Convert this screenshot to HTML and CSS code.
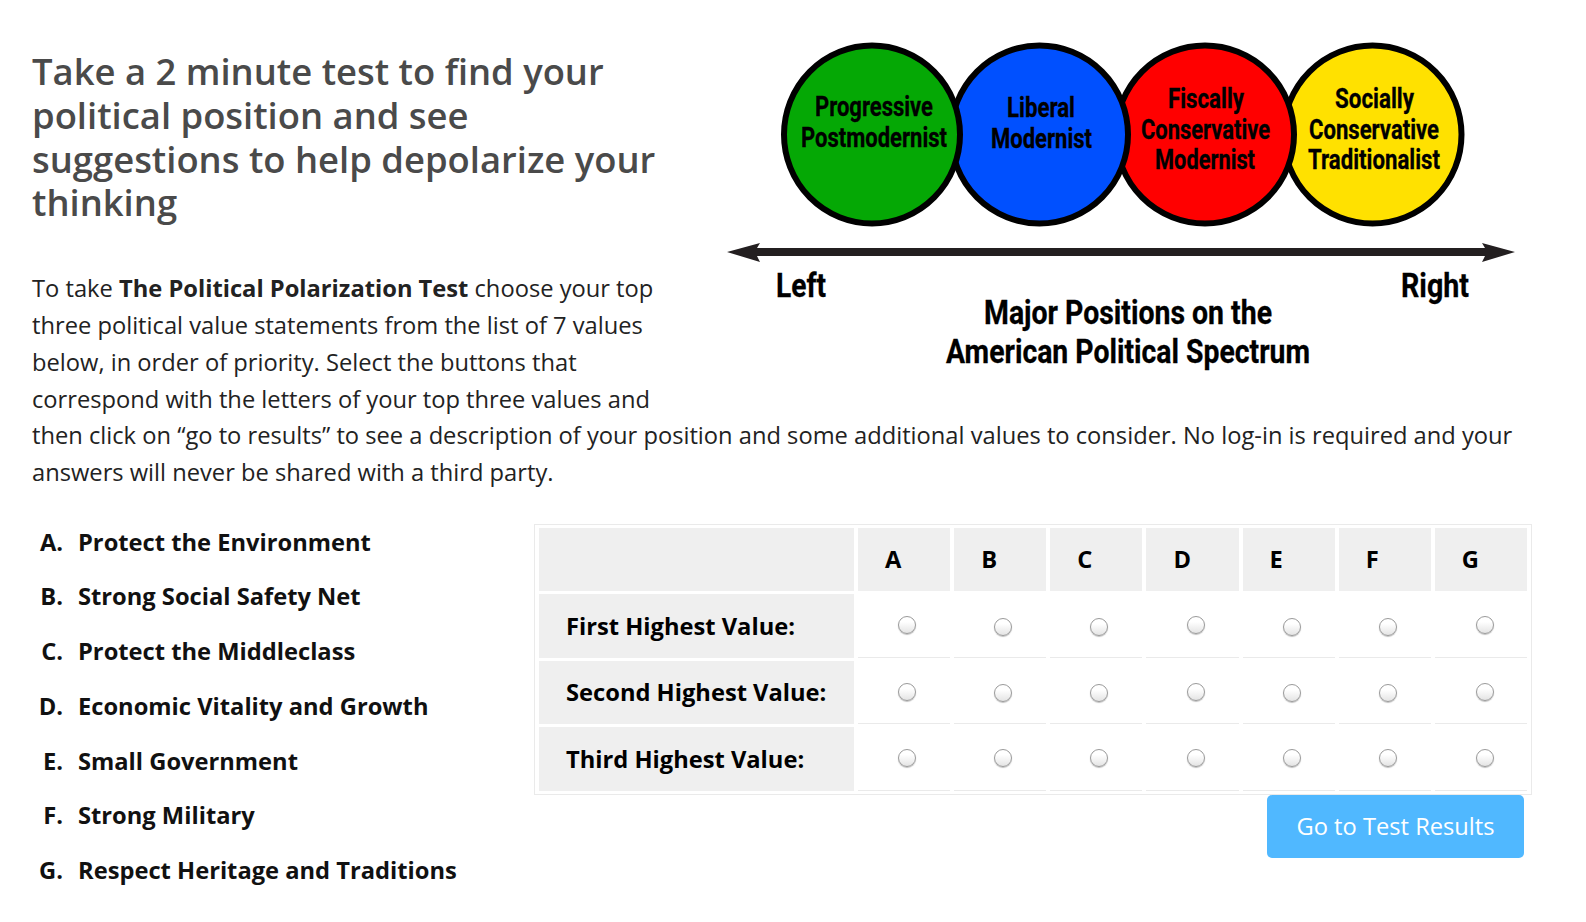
FILE: index.html
```html
<!DOCTYPE html>
<html lang="en">
<head>
    <meta charset="UTF-8">
    <title>The Political Polarization Test</title>
    <link rel="stylesheet" href="styles.css">
</head>
<body>
    <div class="page">
        <div class="intro">
            <svg class="spectrum" viewBox="668 20 864 395" width="864" height="395">
                <ellipse cx="1372.5" cy="134.5" rx="89" ry="89" fill="#ffe100"/>
                <ellipse cx="1205" cy="134.5" rx="89" ry="89" fill="#ff0000"/>
                <ellipse cx="1039.5" cy="134.5" rx="88.5" ry="89" fill="#0050ff"/>
                <ellipse cx="872" cy="134.5" rx="88" ry="89" fill="#05a805"/>

                <path class="axis" d="M727 252 L760 243 L757 248 H1485 L1482 243 L1515 252 L1482 262 L1485 256 H757 L760 262 Z"/>

                <text x="815" y="116" textLength="118" lengthAdjust="spacingAndGlyphs">Progressive</text>
                <text x="801" y="147" textLength="146" lengthAdjust="spacingAndGlyphs">Postmodernist</text>
                <text x="1007" y="117" textLength="68" lengthAdjust="spacingAndGlyphs">Liberal</text>
                <text x="991" y="148" textLength="101" lengthAdjust="spacingAndGlyphs">Modernist</text>
                <text x="1168" y="108" textLength="76" lengthAdjust="spacingAndGlyphs">Fiscally</text>
                <text x="1141" y="139" textLength="129" lengthAdjust="spacingAndGlyphs">Conservative</text>
                <text x="1155" y="169" textLength="100" lengthAdjust="spacingAndGlyphs">Modernist</text>
                <text x="1335" y="108" textLength="79" lengthAdjust="spacingAndGlyphs">Socially</text>
                <text x="1309" y="139" textLength="130" lengthAdjust="spacingAndGlyphs">Conservative</text>
                <text x="1308" y="169" textLength="132" lengthAdjust="spacingAndGlyphs">Traditionalist</text>

                <text class="big" x="776" y="297" textLength="50" lengthAdjust="spacingAndGlyphs">Left</text>
                <text class="big" x="1401" y="297" textLength="68" lengthAdjust="spacingAndGlyphs">Right</text>
                <text class="big" x="984" y="324" textLength="288" lengthAdjust="spacingAndGlyphs">Major Positions on the</text>
                <text class="big" x="946" y="363" textLength="364" lengthAdjust="spacingAndGlyphs">American Political Spectrum</text>
            </svg>
            <h1>Take a 2 minute test to find your political position and see suggestions to help depolarize your thinking</h1>
            <p>To take <strong>The Political Polarization Test</strong> choose your top three political value statements from the list of 7 values below, in order of priority. Select the buttons that correspond with the letters of your top three values and then click on “go to results” to see a description of your position and some additional values to consider. No log-in is required and your answers will never be shared with a third party.</p>
        </div>

        <div class="test-area">
            <ol class="values">
                <li><span class="letter">A.</span> Protect the Environment</li>
                <li><span class="letter">B.</span> Strong Social Safety Net</li>
                <li><span class="letter">C.</span> Protect the Middleclass</li>
                <li><span class="letter">D.</span> Economic Vitality and Growth</li>
                <li><span class="letter">E.</span> Small Government</li>
                <li><span class="letter">F.</span> Strong Military</li>
                <li><span class="letter">G.</span> Respect Heritage and Traditions</li>
            </ol>

            <form class="test-form">
                <table class="grid">
                    <thead>
                        <tr>
                            <th class="row-name"></th>
                            <th>A</th><th>B</th><th>C</th><th>D</th><th>E</th><th>F</th><th>G</th>
                        </tr>
                    </thead>
                    <tbody>
                        <tr>
                            <th class="row-name">First Highest Value:</th>
                            <td><input type="radio" name="first" value="a"></td>
                            <td><input class="low" type="radio" name="first" value="b"></td>
                            <td><input class="low" type="radio" name="first" value="c"></td>
                            <td><input type="radio" name="first" value="d"></td>
                            <td><input class="low" type="radio" name="first" value="e"></td>
                            <td><input class="low" type="radio" name="first" value="f"></td>
                            <td><input type="radio" name="first" value="g"></td>
                        </tr>
                        <tr>
                            <th class="row-name">Second Highest Value:</th>
                            <td><input type="radio" name="second" value="a"></td>
                            <td><input class="low" type="radio" name="second" value="b"></td>
                            <td><input class="low" type="radio" name="second" value="c"></td>
                            <td><input type="radio" name="second" value="d"></td>
                            <td><input class="low" type="radio" name="second" value="e"></td>
                            <td><input class="low" type="radio" name="second" value="f"></td>
                            <td><input type="radio" name="second" value="g"></td>
                        </tr>
                        <tr>
                            <th class="row-name">Third Highest Value:</th>
                            <td><input type="radio" name="third" value="a"></td>
                            <td><input type="radio" name="third" value="b"></td>
                            <td><input type="radio" name="third" value="c"></td>
                            <td><input type="radio" name="third" value="d"></td>
                            <td><input type="radio" name="third" value="e"></td>
                            <td><input type="radio" name="third" value="f"></td>
                            <td><input type="radio" name="third" value="g"></td>
                        </tr>
                    </tbody>
                </table>
                <div class="form-actions">
                    <button type="button">Go to Test Results</button>
                </div>
            </form>
        </div>
    </div>
</body>
</html>
```

FILE: styles.css
```css
body {
    margin: 0;
    background: #fff;
    color: #222;
    font-family: 'Open Sans', sans-serif;
}

.page {
    width: 1500px;
    padding: 20px 54px 0 32px;
}

.intro {
    display: flow-root;
}

.spectrum {
    float: right;
    display: block;
}

.spectrum ellipse {
    stroke: #000;
    stroke-width: 6;
}

.spectrum .axis {
    fill: #231f20;
}

.spectrum text {
    font-family: 'Roboto', sans-serif;
    font-weight: 700;
    font-size: 27px;
    fill: #000;
    stroke: #000;
    stroke-width: 0.3;
}

.spectrum text.big {
    font-size: 34px;
}

h1 {
    margin: 30px 0 0;
    font-size: 36.4px;
    line-height: 43.8px;
    font-weight: 600;
    color: #4a4a4a;
}

.intro p {
    margin: 45.3px 0 0;
    font-size: 23.7px;
    line-height: 36.7px;
}

.test-area {
    display: flex;
    justify-content: space-between;
    margin-top: 32.8px;
}

.values {
    list-style: none;
    margin: -9px 0 0;
    padding: 0;
    font-size: 23.7px;
    font-weight: 700;
    line-height: 54.8px;
    color: #111;
}

.values li {
    display: flex;
    gap: 15px;
}

.values .letter {
    width: 31px;
    text-align: right;
}

.test-form {
    width: 998px;
}

.grid {
    width: 998px;
    table-layout: fixed;
    border: 1px solid #eaeaea;
    border-spacing: 4px 3px;
    color: #000;
}

.grid th {
    height: 63.5px;
    padding: 0 0 0 27px;
    background: #efefef;
    font-size: 23.7px;
    font-weight: 700;
    text-align: left;
}

.grid .row-name {
    width: 315px;
    box-sizing: border-box;
}

.grid td {
    padding: 0 0 3px 6px;
    border-bottom: 1px solid #eaeaea;
    text-align: center;
    vertical-align: middle;
}

.grid td:nth-child(5),
.grid td:nth-child(8) {
    padding-left: 8px;
}

input[type="radio"] {
    appearance: none;
    display: inline-block;
    width: 18px;
    height: 18px;
    margin: 0;
    vertical-align: middle;
    border: 1px solid #9a9a9a;
    border-radius: 50%;
    background: linear-gradient(#fff 30%, #e4e4e4);
    box-shadow: 0 1px 1px rgba(0, 0, 0, 0.25);
}

input[type="radio"].low {
    margin-top: 4px;
}

.form-actions {
    display: flex;
    justify-content: flex-end;
    padding-right: 8px;
}

button {
    width: 257px;
    height: 63px;
    border: none;
    border-radius: 5px;
    background: #50b8ff;
    color: #fff;
    font-family: 'Open Sans', sans-serif;
    font-size: 23.7px;
}
```
